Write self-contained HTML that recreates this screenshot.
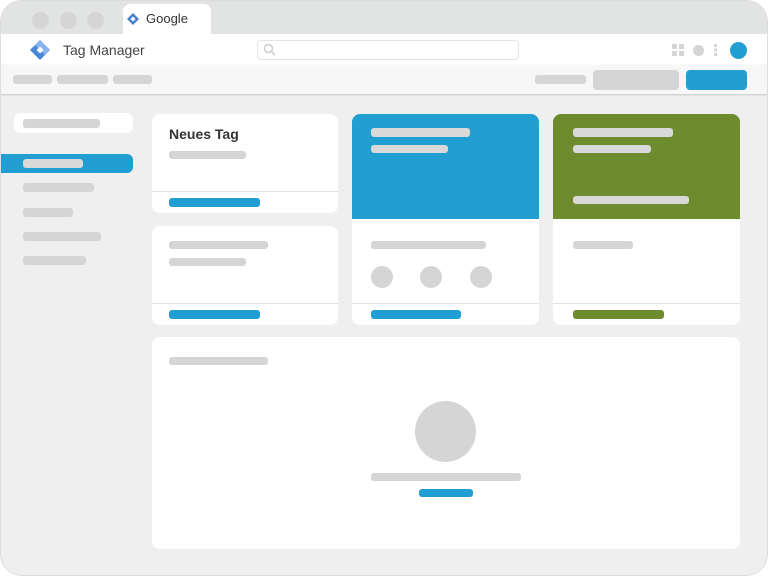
<!DOCTYPE html>
<html><head><meta charset="utf-8"><style>
*{margin:0;padding:0;box-sizing:border-box}
body{width:768px;height:576px;background:#fff;position:relative;overflow:hidden;font-family:"Liberation Sans",sans-serif}
.a{position:absolute}
.frame{left:0;top:0;width:768px;height:576px;background:#efefef;border-radius:22px;overflow:hidden}
.g{background:#d6d5d5;border-radius:3px}
.b{background:#219ed2;border-radius:3px}
.card{background:#fff;border-radius:8px;overflow:hidden}
.dv{height:1px;background:#e3e3e3}
</style></head><body>
<div class="a frame">
<div class="a" style="left:0;top:0;width:768px;height:34px;background:#e2e3e3"></div>
<div class="a" style="left:32px;top:12px;width:17px;height:17px;border-radius:50%;background:#d5d5d5"></div>
<div class="a" style="left:60px;top:12px;width:17px;height:17px;border-radius:50%;background:#d5d5d5"></div>
<div class="a" style="left:87px;top:12px;width:17px;height:17px;border-radius:50%;background:#d5d5d5"></div>
<div class="a" style="left:123px;top:4px;width:88px;height:31px;background:#fff;border-radius:7px 7px 0 0"></div>
<svg class="a" style="left:126px;top:12px" width="14" height="14" viewBox="0 0 14 14"><path d="M7 1L13 7L7 13L1 7Z" fill="#4a7fd4"/><path d="M7 4.5L9.5 7L7 9.5L4.5 7Z" fill="#fff"/></svg>
<div class="a" style="left:146px;top:11px;font-size:13px;color:#333">Google</div>
<div class="a" style="left:0;top:34px;width:768px;height:31px;background:#fff"></div>
<svg class="a" style="left:29px;top:39px" width="22" height="22" viewBox="0 0 22 22"><path d="M11 1L21 11L11 21L1 11Z" fill="#4a86d8"/><path d="M11 1L21 11L16 16L6 6Z" fill="#8ab4f0"/><path d="M11 7.5L14.5 11L11 14.5L7.5 11Z" fill="#fff"/></svg>
<div class="a" style="left:63px;top:42px;font-size:14px;color:#444">Tag Manager</div>
<div class="a" style="left:257px;top:40px;width:262px;height:20px;border:1px solid #e4e4e4;border-radius:4px;background:#fff"></div>
<svg class="a" style="left:263px;top:43px" width="13" height="13" viewBox="0 0 13 13"><circle cx="5.5" cy="5.5" r="4" stroke="#ccc" stroke-width="1.5" fill="none"/><path d="M8.5 8.5L12 12" stroke="#ccc" stroke-width="1.5"/></svg>
<div class="a" style="left:672px;top:44px;width:5px;height:5px;background:#d5d5d5"></div>
<div class="a" style="left:679px;top:44px;width:5px;height:5px;background:#d5d5d5"></div>
<div class="a" style="left:672px;top:51px;width:5px;height:5px;background:#d5d5d5"></div>
<div class="a" style="left:679px;top:51px;width:5px;height:5px;background:#d5d5d5"></div>
<div class="a" style="left:693px;top:45px;width:11px;height:11px;border-radius:50%;background:#d5d5d5"></div>
<div class="a" style="left:714px;top:44px;width:3px;height:12px;background:repeating-linear-gradient(#d5d5d5 0 3px,transparent 3px 4.5px)"></div>
<div class="a" style="left:730px;top:42px;width:17px;height:17px;border-radius:50%;background:#219ed2"></div>
<div class="a" style="left:0;top:65px;width:768px;height:29px;background:#f7f7f7;box-shadow:0 1px 2px #c8c8c8"></div>
<div class="a g" style="left:13px;top:75px;width:39px;height:9px"></div>
<div class="a g" style="left:57px;top:75px;width:51px;height:9px"></div>
<div class="a g" style="left:113px;top:75px;width:39px;height:9px"></div>
<div class="a g" style="left:535px;top:75px;width:51px;height:9px"></div>
<div class="a g" style="left:593px;top:70px;width:86px;height:20px;border-radius:4px"></div>
<div class="a b" style="left:686px;top:70px;width:61px;height:20px;border-radius:4px"></div>

<div class="a" style="left:14px;top:113px;width:119px;height:20px;background:#fff;border-radius:6px"></div>
<div class="a g" style="left:23px;top:119px;width:77px;height:9px"></div>
<div class="a b" style="left:0;top:154px;width:133px;height:19px;border-radius:0 6px 6px 0"></div>
<div class="a" style="left:23px;top:159px;width:60px;height:9px;background:#d9d9d9;border-radius:3px"></div>
<div class="a g" style="left:23px;top:183px;width:71px;height:9px"></div>
<div class="a g" style="left:23px;top:208px;width:50px;height:9px"></div>
<div class="a g" style="left:23px;top:232px;width:78px;height:9px"></div>
<div class="a g" style="left:23px;top:256px;width:63px;height:9px"></div>

<div class="a card" style="left:152px;top:114px;width:186px;height:99px">
<div class="a" style="left:17px;top:12px;font-size:14px;font-weight:bold;color:#333">Neues Tag</div>
<div class="a g" style="left:17px;top:37px;width:77px;height:8px"></div>
<div class="a dv" style="left:0;top:77px;width:186px"></div>
<div class="a b" style="left:17px;top:84px;width:91px;height:9px"></div>
</div>
<div class="a card" style="left:152px;top:226px;width:186px;height:99px">
<div class="a g" style="left:17px;top:15px;width:99px;height:8px"></div>
<div class="a g" style="left:17px;top:32px;width:77px;height:8px"></div>
<div class="a dv" style="left:0;top:77px;width:186px"></div>
<div class="a b" style="left:17px;top:84px;width:91px;height:9px"></div>
</div>
<div class="a card" style="left:352px;top:114px;width:187px;height:211px">
<div class="a" style="left:0;top:0;width:187px;height:105px;background:#219ed2"></div>
<div class="a" style="left:19px;top:14px;width:99px;height:9px;background:#d9d9d9;border-radius:3px"></div>
<div class="a" style="left:19px;top:31px;width:77px;height:8px;background:#d9d9d9;border-radius:3px"></div>
<div class="a g" style="left:19px;top:127px;width:115px;height:8px"></div>
<div class="a" style="left:19px;top:152px;width:22px;height:22px;border-radius:50%;background:#d5d5d5"></div>
<div class="a" style="left:68px;top:152px;width:22px;height:22px;border-radius:50%;background:#d5d5d5"></div>
<div class="a" style="left:118px;top:152px;width:22px;height:22px;border-radius:50%;background:#d5d5d5"></div>
<div class="a dv" style="left:0;top:189px;width:187px"></div>
<div class="a b" style="left:19px;top:196px;width:90px;height:9px"></div>
</div>
<div class="a card" style="left:553px;top:114px;width:187px;height:211px">
<div class="a" style="left:0;top:0;width:187px;height:105px;background:#6e8b2e"></div>
<div class="a" style="left:20px;top:14px;width:100px;height:9px;background:#d9d9d9;border-radius:3px"></div>
<div class="a" style="left:20px;top:31px;width:78px;height:8px;background:#d9d9d9;border-radius:3px"></div>
<div class="a" style="left:20px;top:82px;width:116px;height:8px;background:#d9d9d9;border-radius:3px"></div>
<div class="a g" style="left:20px;top:127px;width:60px;height:8px"></div>
<div class="a dv" style="left:0;top:189px;width:187px"></div>
<div class="a" style="left:20px;top:196px;width:91px;height:9px;background:#6e8b2e;border-radius:3px"></div>
</div>
<div class="a card" style="left:152px;top:337px;width:588px;height:212px">
<div class="a g" style="left:17px;top:20px;width:99px;height:8px"></div>
<div class="a" style="left:263px;top:64px;width:61px;height:61px;border-radius:50%;background:#d5d5d5"></div>
<div class="a g" style="left:219px;top:136px;width:150px;height:8px"></div>
<div class="a b" style="left:267px;top:152px;width:54px;height:8px"></div>
</div>
</div>
<div class="a" style="left:0;top:0;width:768px;height:576px;border-radius:22px;border:1px solid #ddd;pointer-events:none"></div>
</body></html>
